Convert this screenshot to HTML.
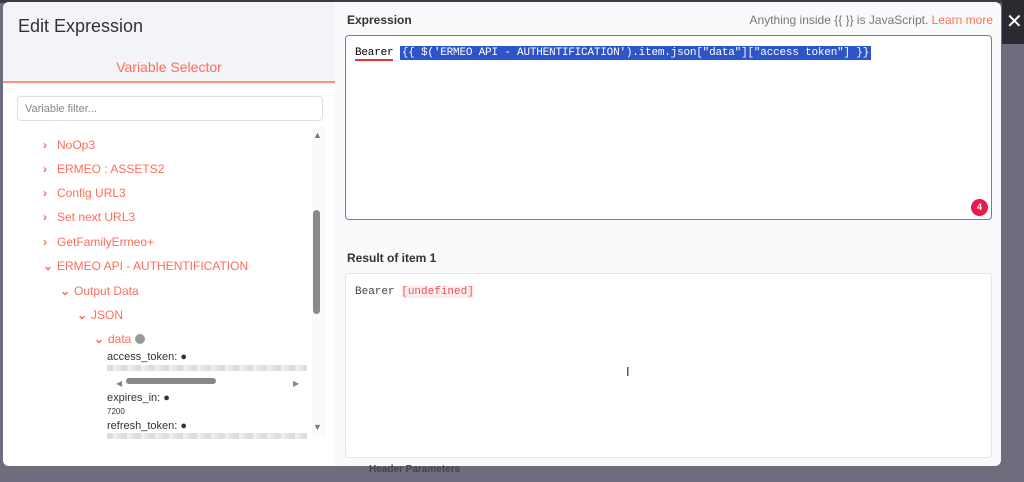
<!DOCTYPE html>
<html><head><meta charset="utf-8"><style>
*{box-sizing:border-box;margin:0;padding:0}
body{width:1024px;height:482px;overflow:hidden;background:#6f6c7e;font-family:"Liberation Sans",sans-serif;position:relative}
.topbar{position:absolute;left:0;top:0;width:1024px;height:3px;background:#3d3b47}
.close{position:absolute;left:1002px;top:0;width:22px;height:44px;background:#2b2a30;color:#fff;font-size:20px;line-height:44px;padding-left:4px}
.modal{position:absolute;left:3px;top:2px;width:998px;height:464px;background:#f9fafc;border-radius:6px;overflow:hidden}
.left{position:absolute;left:0;top:0;width:332px;height:464px;background:#fff}
.lhead{background:#f3f4f7;height:81px;border-bottom:2px solid #ff8f7a}
.title{position:absolute;left:15px;top:14px;font-size:18px;color:#333}
.vs{position:absolute;left:0;width:332px;top:57px;text-align:center;color:#ff6d5a;font-size:14px}
.filter{position:absolute;left:14px;top:94px;width:306px;height:25px;border:1px solid #dcdfe6;border-radius:4px;font-size:11px;color:#888;padding:6px 7px}
.tree{position:absolute;left:0;top:125px;width:310px;color:#ff6d5a;font-size:12px}
.it{position:absolute;white-space:nowrap}
.chev{display:inline-block;width:14px;font-weight:bold}
.sb{position:absolute;left:309px;top:125px;width:14px;height:310px;background:#fafafa}
.thumb{position:absolute;left:310px;top:208px;width:7px;height:104px;background:#8a8a8a;border-radius:4px}
.dk{color:#333;font-size:11px}
.blur{position:absolute;height:6px;background:repeating-linear-gradient(90deg,#ddd 0 6px,#eee 6px 10px,#e4e4e4 10px 14px)}
.h{position:absolute;font-size:12px;font-weight:bold;color:#333;white-space:nowrap}
.box{position:absolute;background:#fff;border-radius:4px}
.mono{font-family:"Liberation Mono",monospace;font-size:11px}
</style></head><body>
<div class="topbar"></div>
<div class="modal">
 <div class="left">
  <div class="lhead"></div>
  <div class="title">Edit Expression</div>
  <div class="vs">Variable Selector</div>
  <div class="filter">Variable filter...</div>
  <div class="tree">
   <div class="it" style="left:40px;top:11px"><span class="chev">›</span>NoOp3</div>
   <div class="it" style="left:40px;top:35px"><span class="chev">›</span>ERMEO : ASSETS2</div>
   <div class="it" style="left:40px;top:59px"><span class="chev">›</span>Config URL3</div>
   <div class="it" style="left:40px;top:83px"><span class="chev">›</span>Set next URL3</div>
   <div class="it" style="left:40px;top:108px"><span class="chev">›</span>GetFamilyErmeo+</div>
   <div class="it" style="left:40px;top:132px"><span class="chev">⌄</span>ERMEO API - AUTHENTIFICATION</div>
   <div class="it" style="left:57px;top:157px"><span class="chev">⌄</span>Output Data</div>
   <div class="it" style="left:74px;top:181px"><span class="chev">⌄</span>JSON</div>
   <div class="it" style="left:91px;top:205px"><span class="chev">⌄</span>data <span style="display:inline-block;width:10px;height:10px;border-radius:5px;background:#999;vertical-align:-1px"></span></div>
   <div class="it dk" style="left:104px;top:224px">access_token: ●</div>
   <div class="blur" style="left:104px;top:238px;width:200px"></div>
   <div style="position:absolute;left:113px;top:252px;font-size:8px;color:#888">◀</div>
   <div style="position:absolute;left:123px;top:251px;width:90px;height:6px;border-radius:3px;background:#888"></div>
   <div style="position:absolute;left:290px;top:252px;font-size:8px;color:#888">▶</div>
   <div class="it dk" style="left:104px;top:265px">expires_in: ●</div>
   <div class="it" style="left:104px;top:280px;color:#333;font-size:8px">7200</div>
   <div class="it dk" style="left:104px;top:293px">refresh_token: ●</div>
   <div class="blur" style="left:104px;top:306px;width:200px"></div>
  </div>
  <div class="sb"></div><div class="thumb"></div>
  <div style="position:absolute;left:310px;top:128px;font-size:9px;color:#777">▲</div>
  <div style="position:absolute;left:310px;top:420px;font-size:9px;color:#777">▼</div>
 </div>
 <div class="h" style="left:344px;top:11px">Expression</div>
 <div style="position:absolute;right:8px;top:11px;font-size:12px;color:#777">Anything inside {{ }} is JavaScript. <span style="color:#ff6d5a">Learn more</span></div>
 <div class="box" style="left:342px;top:33px;width:647px;height:185px;border:1px solid #7b6fd0">
  <div class="mono" style="position:absolute;left:9px;top:11px;white-space:nowrap;letter-spacing:-0.2px"><span style="border-bottom:2px solid #e33">Bearer</span> <span style="background:#2d54c8;color:#fff;padding:1px 2px">{{ $('ERMEO API - AUTHENTIFICATION').item.json["data"]["access token"] }}</span></div>
  <div style="position:absolute;left:625px;top:163px;width:17px;height:17px;border-radius:9px;background:#e8194b;color:#fff;font-size:9px;font-weight:bold;text-align:center;line-height:17px">4</div>
 </div>
 <div class="h" style="left:344px;top:249px">Result of item 1</div>
 <div class="box" style="left:342px;top:271px;width:647px;height:185px;border:1px solid #e4e5ec">
  <div class="mono" style="position:absolute;left:9px;top:12px;color:#444">Bearer <span style="background:#fdeeee;color:#e55">[undefined]</span></div>
 </div>
 <div style="position:absolute;left:623px;top:362px;font-size:13px;color:#333">I</div>
</div>
<div class="close">✕</div>
<div style="position:absolute;left:369px;top:464px;font-size:10px;color:#444;font-weight:bold">Header Parameters</div>
</body></html>
